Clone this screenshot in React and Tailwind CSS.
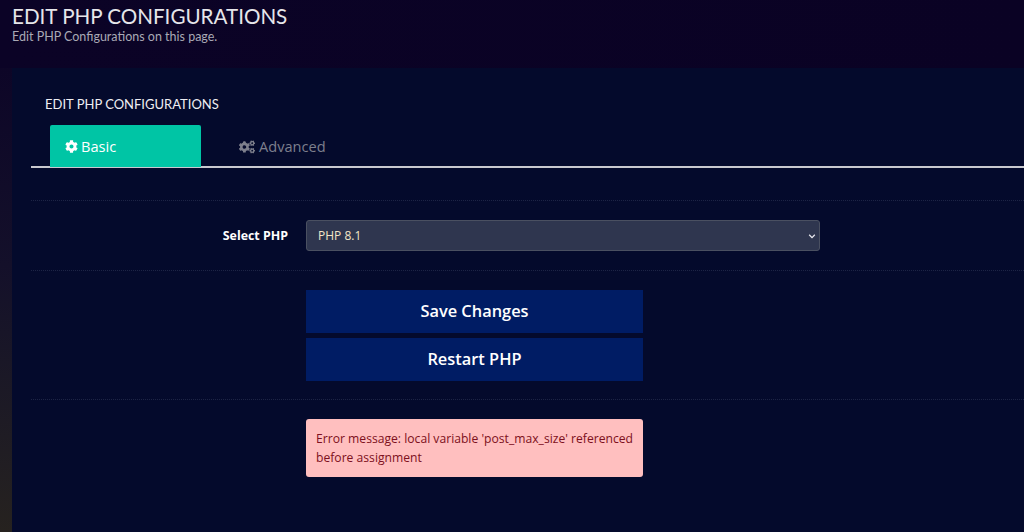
import React from 'react';
import { FaCog, FaCogs } from 'react-icons/fa';

export default function App() {
  return (
    <div className="h-[532px] w-[1024px] overflow-hidden bg-gradient-to-b from-[#0b0326] via-[#14102a] to-[#26221f] font-['Open_Sans',sans-serif]">
      {/* Page header */}
      <div className="h-[68px] bg-gradient-to-r from-[#0b0326] to-[#0a0224] pl-3 pt-[5px] font-['Lato',sans-serif]">
        <h1 className="text-[20.6px] leading-[22px] text-[#e6e6ea]">EDIT PHP CONFIGURATIONS</h1>
        <p className="mt-[3px] text-[12.5px] leading-[14px] text-[#a9a9b5]">Edit PHP Configurations on this page.</p>
      </div>

      {/* Card */}
      <div className="ml-3 h-[464px] bg-[#040a2c] pl-[19px]">
        <h2 className="pl-[14px] pt-[29px] font-['Lato',sans-serif] text-[13px] leading-[14px] text-[#eeeef2]">EDIT PHP CONFIGURATIONS</h2>

        {/* Tabs */}
        <div className="mt-[14px] flex h-[43px] border-b-2 border-[#c9c9cf] pl-[19px] text-[14.6px]">
          <div className="flex h-[42px] w-[151px] items-center gap-[3px] rounded-t-[2px] bg-[#00c5a5] pl-[15px] pt-px text-white">
            <FaCog className="h-[13px] w-[13px]" />
            <span>Basic</span>
          </div>
          <div className="flex h-[42px] items-center gap-[4px] pl-[38px] pt-px text-[#7d7f8c]">
            <FaCogs className="h-[16px] w-[16px]" />
            <span>Advanced</span>
          </div>
        </div>

        {/* Select row */}
        <div className="mt-[32px] flex h-[71px] items-center border-y border-dotted border-[#1d2445]">
          <label className="w-[275px] pr-[18px] pt-px text-right text-[12.4px] font-bold text-white">Select PHP</label>
          <div className="flex h-[31px] w-[514px] items-center justify-between rounded-[3px] border border-[#4a5061] bg-[#2f364f] pl-[11px] pr-[3px] pt-px text-[12px] text-[#f3e6c8]">
            <span>PHP 8.1</span>
            <svg viewBox="0 0 10 10" className="h-[8px] w-[8px]" fill="none" stroke="#e8e8ee" strokeWidth="1.6">
              <path d="M1.5 3.5 5 7l3.5-3.5" />
            </svg>
          </div>
        </div>

        {/* Buttons */}
        <div className="flex h-[129px] flex-col gap-[5px] border-b border-dotted border-[#1d2445] pl-[275px] pt-[19px]">
          <button className="h-[43px] w-[337px] bg-[#001c64] text-[16.4px] font-semibold text-white">Save Changes</button>
          <button className="h-[43px] w-[337px] bg-[#001c64] text-[16.4px] font-semibold text-white">Restart PHP</button>
        </div>

        {/* Error */}
        <div className="ml-[275px] mt-[19px] h-[58px] w-[337px] rounded-[3px] bg-[#ffbfbf] pl-[10px] pr-[4px] pt-[10px] text-[12.15px] leading-[19px] text-[#7d1020]">
          Error message: local variable 'post_max_size' referenced before assignment
        </div>
      </div>
    </div>
  );
}
